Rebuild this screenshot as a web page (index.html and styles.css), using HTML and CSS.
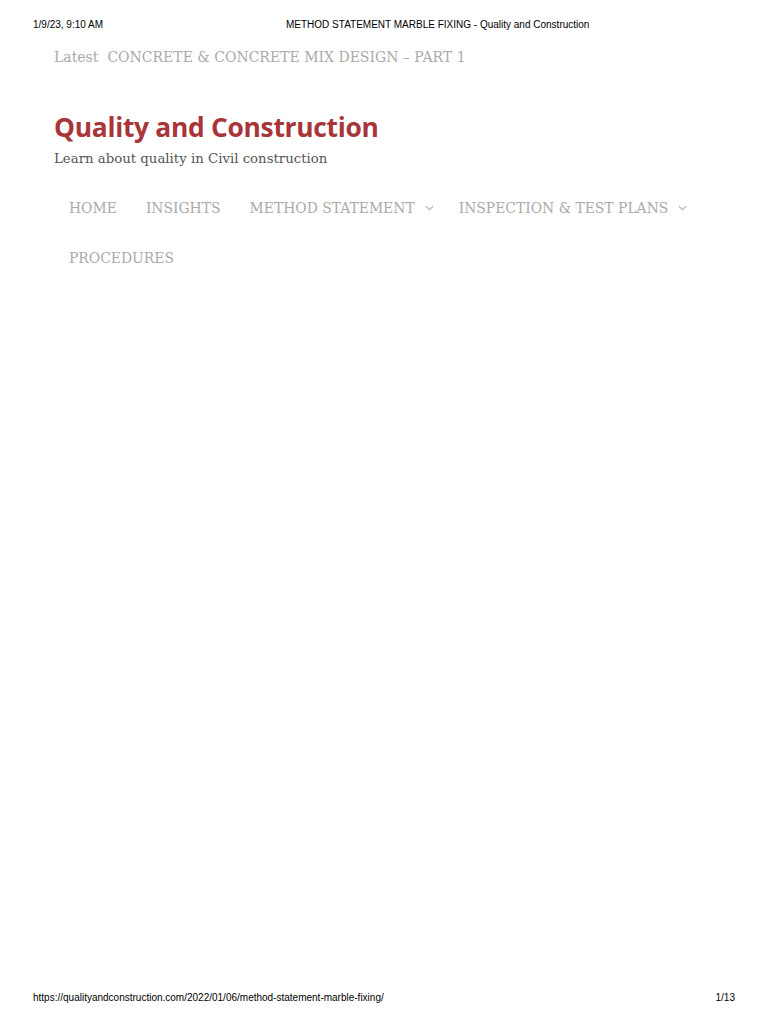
FILE: index.html
```html
<!DOCTYPE html>
<html>
<head>
<meta charset="utf-8">
<link rel="stylesheet" href="styles.css">
</head>
<body>
<div class="page">
  <div class="print-head">
    <span class="ph-date">1/9/23, 9:10 AM</span>
    <span class="ph-title">METHOD STATEMENT MARBLE FIXING - Quality and Construction</span>
  </div>
  <div class="site">
    <div class="latest"><span class="latest-label">Latest</span><span class="latest-link">CONCRETE &amp; CONCRETE MIX DESIGN – PART 1</span></div>
    <div class="branding">
      <div class="site-title">Quality and Construction</div>
      <div class="site-desc">Learn about quality in Civil construction</div>
    </div>
    <nav class="nav">
      <div class="nav-item">HOME</div>
      <div class="nav-item">INSIGHTS</div>
      <div class="nav-item has-sub">METHOD STATEMENT<svg class="chev" viewBox="0 0 10 6" width="9" height="6"><path d="M1 1l4 4 4-4" fill="none" stroke="#aaa" stroke-width="1.2"/></svg></div>
      <div class="nav-item has-sub">INSPECTION &amp; TEST PLANS<svg class="chev" viewBox="0 0 10 6" width="9" height="6"><path d="M1 1l4 4 4-4" fill="none" stroke="#aaa" stroke-width="1.2"/></svg></div>
      <div class="nav-item">PROCEDURES</div>
    </nav>
  </div>
  <div class="spacer"></div>
  <div class="print-foot">
    <span>https://qualityandconstruction.com/2022/01/06/method-statement-marble-fixing/</span>
    <span>1/13</span>
  </div>
</div>
</body>
</html>
```

FILE: styles.css
```css
html, body { margin: 0; padding: 0; background: #fff; }
.page {
  width: 768px;
  height: 1024px;
  display: flex;
  flex-direction: column;
  box-sizing: border-box;
}
.print-head {
  display: flex;
  height: 12px;
  margin-top: 19px;
  padding: 0 33px;
  font-family: "Liberation Sans", Arial, sans-serif;
  font-size: 10px;
  line-height: 12px;
  color: #000;
}
.ph-date { width: 253px; }
.site {
  padding-left: 54px;
  width: 660px;
}
.latest {
  margin-top: 16px;
  font-family: "DejaVu Serif", serif;
  font-size: 14px;
  line-height: 20px;
  color: #aaa;
  display: flex;
  gap: 9px;
}
.branding { margin-top: 42px; }
.site-title {
  font-family: "Open Sans", sans-serif;
  font-weight: 700;
  font-size: 26.4px;
  line-height: 36px;
  color: #a8353a;
  letter-spacing: -0.3px;
}
.site-desc {
  font-family: "DejaVu Serif", serif;
  font-size: 13.3px;
  line-height: 20px;
  color: #555;
  margin-top: 4px;
}
.nav {
  margin-top: 14px;
  display: flex;
  flex-wrap: wrap;
}
.nav-item {
  padding: 0 14px 0 15px;
  height: 50px;
  display: flex;
  align-items: center;
  font-family: "DejaVu Serif", serif;
  font-size: 13.9px;
  color: #aaa;
}
.nav-item.has-sub { padding-right: 10px; }
.chev { margin-left: 10px; }
.spacer { flex: 1; }
.print-foot {
  display: flex;
  justify-content: space-between;
  padding: 0 33px;
  margin-bottom: 20px;
  font-family: "Liberation Sans", Arial, sans-serif;
  font-size: 10px;
  line-height: 12px;
  color: #000;
}
```
